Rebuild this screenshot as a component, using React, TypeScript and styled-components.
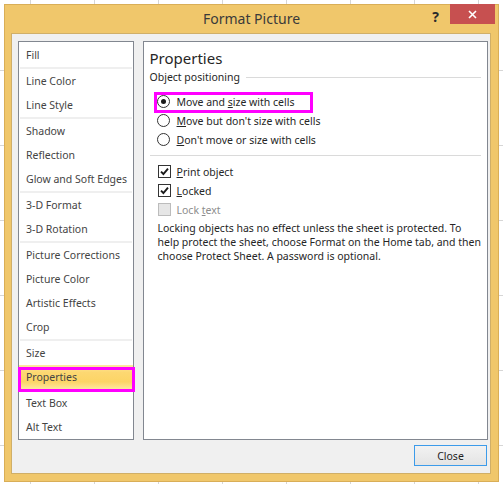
import React from "react";
import styled, { createGlobalStyle } from "styled-components";

const GlobalStyle = createGlobalStyle`
  html, body {
    margin: 0;
    padding: 0;
  }
  body {
    width: 503px;
    height: 484px;
    overflow: hidden;
    background-color: #ffffff;
    background-image:
      linear-gradient(to right, #d6d6d6 1px, transparent 1px),
      linear-gradient(to bottom, #d6d6d6 1px, transparent 1px);
    background-size: 64px 75px;
    background-position: 30px 70px;
    font-family: "Noto Sans", "Open Sans", sans-serif;
  }
`;

// Spreadsheet behind the dialog
const Page = styled.div`
  padding: 4px;
  box-sizing: border-box;
  width: 503px;
  height: 484px;
`;

// Window frame (Office 2013 yellow-ish accent)
const Dialog = styled.div`
  width: 495px;
  height: 478px;
  box-sizing: border-box;
  background: #f0c76b;
  border: 1px solid #d9ae57;
  display: flex;
  flex-direction: column;
`;

const TitleBar = styled.div`
  height: 28px;
  display: grid;
  grid-template-columns: 1fr auto 1fr;
  align-items: start;
`;

const Title = styled.div`
  grid-column: 2;
  font-size: 14px;
  line-height: 28px;
  color: #3a3a3a;
`;

const Controls = styled.div`
  grid-column: 3;
  justify-self: end;
  display: flex;
  align-items: flex-start;
  gap: 11px;
  margin-top: -1px;
  padding-right: 3px;
`;

const HelpGlyph = styled.span`
  font-size: 14px;
  font-weight: 700;
  line-height: 20px;
  color: #2b2b2b;
  margin-top: 3px;
`;

const CloseX = styled.div`
  width: 45px;
  height: 20px;
  background: #c75050;
  display: flex;
  align-items: center;
  justify-content: center;
`;

const Body = styled.div`
  flex: 1;
  margin: 0 7px 7px 6px;
  background: #f0f0f0;
  border: 1px solid #d0af68;
  padding: 7px 2px 7px 6px;
  display: flex;
  flex-direction: column;
  gap: 5px;
`;

const Panels = styled.div`
  height: 399px;
  display: flex;
  gap: 9px;
`;

const NavPanel = styled.div`
  width: 116px;
  box-sizing: border-box;
  border: 1px solid #828790;
  background: #ffffff;
  padding-top: 1px;
`;

const NavItem = styled.div<{ $selected?: boolean }>`
  position: relative;
  height: 24px;
  line-height: 24px;
  padding-left: 7px;
  font-size: 10.5px;
  color: #444444;
  white-space: nowrap;
  background: ${(p) =>
    p.$selected
      ? "linear-gradient(to bottom, #fde9a2 0%, #fdd872 30%, #fcd466 70%, #fde6a0 100%)"
      : "transparent"};

  &::after {
    content: "";
    display: ${(p) => (p.$selected ? "block" : "none")};
    position: absolute;
    left: -1px;
    top: 2px;
    width: 117px;
    height: 25px;
    box-sizing: border-box;
    border: 3px solid #ff00ff;
    z-index: 1;
  }
`;

const NavSeparator = styled.div`
  height: 2px;
  margin: 0 1px;
  background: #efefef;
`;

const ContentPanel = styled.div`
  flex: 1;
  box-sizing: border-box;
  border: 1px solid #828790;
  background: #ffffff;
  padding: 6px 6px 0 6px;
  color: #262626;
  font-size: 10.5px;
`;

const Heading = styled.div`
  font-size: 15px;
  line-height: 20px;
  color: #262626;
`;

const SectionLabel = styled.div`
  display: flex;
  align-items: center;
  gap: 6px;
  line-height: 14px;
  margin-top: 2px;

  &::after {
    content: "";
    flex: 1;
    height: 1px;
    background: #dadada;
  }
`;

const OptionList = styled.div<{ $top: number }>`
  padding-left: 7px;
  margin-top: ${(p) => p.$top}px;
  display: flex;
  flex-direction: column;
`;

const OptionRow = styled.div<{ $marked?: boolean; $disabled?: boolean }>`
  position: relative;
  height: 19px;
  display: flex;
  align-items: center;
  gap: 7px;
  color: ${(p) => (p.$disabled ? "#8d8d8d" : "#262626")};

  u {
    text-decoration-thickness: 1px;
    text-underline-offset: 1px;
  }

  &::after {
    content: "";
    display: ${(p) => (p.$marked ? "block" : "none")};
    position: absolute;
    left: -3px;
    top: 0;
    width: 159px;
    height: 21px;
    box-sizing: border-box;
    border: 3px solid #ff00ff;
  }
`;

const Radio = styled.span<{ $checked?: boolean }>`
  width: 13px;
  height: 13px;
  box-sizing: border-box;
  border-radius: 50%;
  border: 1px solid #333333;
  background: #ffffff;
  display: flex;
  align-items: center;
  justify-content: center;
  flex-shrink: 0;

  &::before {
    content: "";
    display: ${(p) => (p.$checked ? "block" : "none")};
    width: 5px;
    height: 5px;
    border-radius: 50%;
    background: #1a1a1a;
  }
`;

const Check = styled.span<{ $disabled?: boolean }>`
  width: 13px;
  height: 13px;
  box-sizing: border-box;
  border: 1px solid ${(p) => (p.$disabled ? "#bcbcbc" : "#333333")};
  background: ${(p) => (p.$disabled ? "#e6e6e6" : "#ffffff")};
  display: flex;
  align-items: center;
  justify-content: center;
  flex-shrink: 0;
  margin-left: 1px;
  margin-right: -1px;
`;

const Divider = styled.div`
  height: 1px;
  background: #dadada;
  margin: 6px 0 6px 0;
`;

const Note = styled.p`
  margin: 2px 0 0 8px;
  line-height: 14px;
  white-space: nowrap;
  color: #262626;
`;

const Footer = styled.div`
  display: flex;
  justify-content: flex-end;
`;

const Button = styled.button`
  width: 73px;
  height: 21px;
  box-sizing: border-box;
  border: 1px solid #3c9bea;
  background: linear-gradient(to bottom, #f2f2f2, #e4e4e4);
  font-family: inherit;
  font-size: 10.5px;
  color: #1e1e1e;
  padding: 0;
  margin-right: 1px;
  cursor: pointer;
`;

const navGroups = [
  ["Fill"],
  ["Line Color", "Line Style"],
  ["Shadow", "Reflection", "Glow and Soft Edges"],
  ["3-D Format", "3-D Rotation"],
  ["Picture Corrections", "Picture Color", "Artistic Effects", "Crop"],
  ["Size", "Properties"],
  ["Text Box", "Alt Text"],
];

const CheckMark = () => (
  <svg width="11" height="11" viewBox="0 0 11 11">
    <path d="M2 5.6 L4.4 8 L9 2.6" fill="none" stroke="#1a1a1a" strokeWidth="1.9" />
  </svg>
);

export default function App() {
  return (
    <>
      <GlobalStyle />
      <Page>
        <Dialog>
          <TitleBar>
            <Title>Format Picture</Title>
            <Controls>
              <HelpGlyph>?</HelpGlyph>
              <CloseX>
                <svg width="9" height="9" viewBox="0 0 9 9">
                  <path d="M1 1 L8 8 M8 1 L1 8" stroke="#ffffff" strokeWidth="1.6" />
                </svg>
              </CloseX>
            </Controls>
          </TitleBar>

          <Body>
            <Panels>
              <NavPanel>
                {navGroups.map((group, gi) => (
                  <React.Fragment key={gi}>
                    {gi > 0 && <NavSeparator />}
                    {group.map((label) => (
                      <NavItem key={label} $selected={label === "Properties"}>
                        {label}
                      </NavItem>
                    ))}
                  </React.Fragment>
                ))}
              </NavPanel>

              <ContentPanel>
                <Heading>Properties</Heading>
                <SectionLabel>Object positioning</SectionLabel>

                <OptionList $top={8}>
                  <OptionRow $marked>
                    <Radio $checked />
                    <span>
                      Move and <u>s</u>ize with cells
                    </span>
                  </OptionRow>
                  <OptionRow>
                    <Radio />
                    <span>
                      <u>M</u>ove but don't size with cells
                    </span>
                  </OptionRow>
                  <OptionRow>
                    <Radio />
                    <span>
                      <u>D</u>on't move or size with cells
                    </span>
                  </OptionRow>
                </OptionList>

                <Divider />

                <OptionList $top={0}>
                  <OptionRow>
                    <Check>
                      <CheckMark />
                    </Check>
                    <span>
                      <u>P</u>rint object
                    </span>
                  </OptionRow>
                  <OptionRow>
                    <Check>
                      <CheckMark />
                    </Check>
                    <span>
                      <u>L</u>ocked
                    </span>
                  </OptionRow>
                  <OptionRow $disabled>
                    <Check $disabled />
                    <span>
                      Lock <u>t</u>ext
                    </span>
                  </OptionRow>
                </OptionList>

                <Note>
                  Locking objects has no effect unless the sheet is protected. To
                  <br />
                  help protect the sheet, choose Format on the Home tab, and then
                  <br />
                  choose Protect Sheet. A password is optional.
                </Note>
              </ContentPanel>
            </Panels>

            <Footer>
              <Button>Close</Button>
            </Footer>
          </Body>
        </Dialog>
      </Page>
    </>
  );
}
